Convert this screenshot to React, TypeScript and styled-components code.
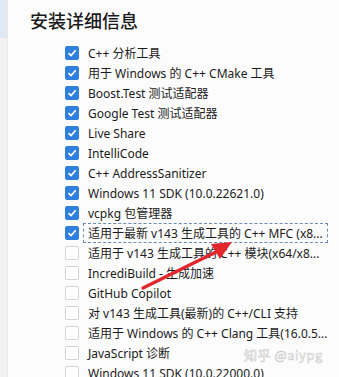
import React from "react";
import styled, { createGlobalStyle } from "styled-components";

// Styles globaux de la page
const GlobalStyle = createGlobalStyle`
  html, body {
    margin: 0;
    padding: 0;
    height: 100%;
    overflow: hidden;
    background: #fcfcfc;
  }
  body {
    font-family: "Noto Sans", "Noto Sans CJK SC", sans-serif;
    color: #1b1b1b;
  }
`;

interface Component {
  label: string;
  checked: boolean;
  focused?: boolean;
}

const components: Component[] = [
  { label: "C++ 分析工具", checked: true },
  { label: "用于 Windows 的 C++ CMake 工具", checked: true },
  { label: "Boost.Test 测试适配器", checked: true },
  { label: "Google Test 测试适配器", checked: true },
  { label: "Live Share", checked: true },
  { label: "IntelliCode", checked: true },
  { label: "C++ AddressSanitizer", checked: true },
  { label: "Windows 11 SDK (10.0.22621.0)", checked: true },
  { label: "vcpkg 包管理器", checked: true },
  { label: "适用于最新 v143 生成工具的 C++ MFC (x8...", checked: true, focused: true },
  { label: "适用于 v143 生成工具的 C++ 模块(x64/x8...", checked: false },
  { label: "IncrediBuild - 生成加速", checked: false },
  { label: "GitHub Copilot", checked: false },
  { label: "对 v143 生成工具(最新)的 C++/CLI 支持", checked: false },
  { label: "适用于 Windows 的 C++ Clang 工具(16.0.5...", checked: false },
  { label: "JavaScript 诊断", checked: false },
  { label: "Windows 11 SDK (10.0.22000.0)", checked: false },
];

// Conteneur principal
const Page = styled.div`
  position: relative;
  display: flex;
  height: 377px;
  overflow: hidden;
`;

// Bande latérale gauche
const SideStrip = styled.aside`
  width: 7px;
  flex-shrink: 0;
  display: flex;
  flex-direction: column;
  border-right: 1px solid #e9e9e9;
`;

const StripTop = styled.div`
  height: 38px;
  background: #dfe9f5;
`;

const StripRest = styled.div`
  flex: 1;
  background: #f2f2f2;
`;

const Main = styled.main`
  flex: 1;
  padding: 8px 0 0 22px;
`;

const Title = styled.h2`
  margin: 0 0 11px;
  font-family: "Noto Sans CJK SC", sans-serif;
  font-size: 18px;
  line-height: 24px;
  font-weight: 500;
  color: #1a1a1a;
`;

const List = styled.ul`
  list-style: none;
  margin: 0;
  padding: 0 0 0 35px;
`;

const Row = styled.li`
  display: flex;
  align-items: center;
  height: 20px;
  gap: 4px;
`;

const Box = styled.span<{ $checked: boolean }>`
  width: 14px;
  height: 14px;
  box-sizing: border-box;
  flex-shrink: 0;
  border-radius: 2px;
  display: flex;
  align-items: center;
  justify-content: center;
  background: ${({ $checked }) => ($checked ? "#2f7fde" : "#ffffff")};
  border: 1px solid ${({ $checked }) => ($checked ? "#2f7fde" : "#d4d4d4")};
`;

const Label = styled.span<{ $focused: boolean }>`
  box-sizing: border-box;
  height: 20px;
  max-width: 245px;
  padding: 0 4px;
  display: flex;
  align-items: center;
  font-size: 12px;
  white-space: nowrap;
  overflow: hidden;
  text-overflow: ellipsis;
  border: 1px dashed ${({ $focused }) => ($focused ? "#6b8bb0" : "transparent")};
`;

// Flèche rouge d'annotation
const Overlay = styled.svg`
  position: absolute;
  left: 0;
  top: 0;
  pointer-events: none;
`;

const Watermark = styled.span`
  position: absolute;
  left: 244px;
  top: 345px;
  font-family: "Noto Sans CJK SC", sans-serif;
  font-size: 13px;
  color: rgba(255, 255, 255, 0.7);
  -webkit-text-stroke: 0.5px #c6c6c6;
  letter-spacing: 0.5px;
`;

function Check() {
  return (
    <svg width="10" height="10" viewBox="0 0 10 10">
      <path d="M1.5 5.2 L4 7.6 L8.6 2.4" fill="none" stroke="#fff" strokeWidth="1.6" />
    </svg>
  );
}

export default function App() {
  return (
    <>
      <GlobalStyle />
      <Page>
        <SideStrip>
          <StripTop />
          <StripRest />
        </SideStrip>
        <Main>
          <Title>安装详细信息</Title>
          <List>
            {components.map((c) => (
              <Row key={c.label}>
                <Box $checked={c.checked}>{c.checked && <Check />}</Box>
                <Label $focused={!!c.focused}>{c.label}</Label>
              </Row>
            ))}
          </List>
        </Main>
        <Overlay width="339" height="377">
          <line x1="143" y1="288" x2="220" y2="250" stroke="#e3262c" strokeWidth="3.5" strokeLinecap="round" />
          <polygon points="232,242 211,244 220,259" fill="#e3262c" />
        </Overlay>
        <Watermark>知乎 @aiypg</Watermark>
      </Page>
    </>
  );
}
